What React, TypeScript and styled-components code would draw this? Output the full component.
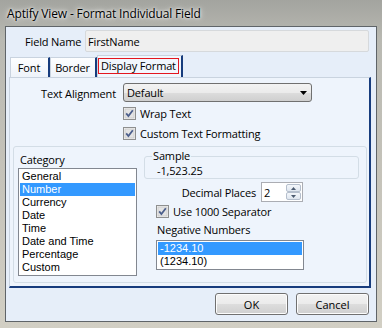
import React from "react";
import styled, { createGlobalStyle } from "styled-components";

const GlobalStyle = createGlobalStyle`
  html, body {
    margin: 0;
    padding: 0;
  }
  body {
    font-family: "Open Sans", "Noto Sans", sans-serif;
    font-size: 11px;
    letter-spacing: -0.15px;
    color: #000;
  }
`;

const Frame = styled.div`
  width: 382px;
  height: 328px;
  box-sizing: border-box;
  padding: 0 5px 6px 5px;
  display: flex;
  flex-direction: column;
  background: linear-gradient(180deg, #a3a49f 0%, #b9b9b2 12%, #c4c2b9 50%, #d2cfc4 100%);
`;

const TitleBar = styled.div`
  height: 26px;
  flex-shrink: 0;
  display: flex;
  align-items: center;
  padding-left: 2px;
  font-size: 12px;
  color: #000;
  text-shadow: 0 0 6px #fff, 0 0 3px #fff;
`;

const Client = styled.div`
  flex: 1;
  min-height: 0;
  border: 1px solid #5f6468;
  background: #e6eef9;
  display: flex;
  flex-direction: column;
`;

const FieldRow = styled.div`
  display: flex;
  align-items: center;
  padding: 3px 7px 0 19px;
`;

const FieldLabel = styled.span`
  width: 60px;
  white-space: nowrap;
`;

const ReadOnlyInput = styled.div`
  flex: 1;
  height: 22px;
  box-sizing: border-box;
  border: 1px solid #d6d9dc;
  border-radius: 2px;
  background: #efefef;
  display: flex;
  align-items: center;
  padding-left: 2px;
`;

const TabStrip = styled.div`
  display: flex;
  align-items: flex-end;
  padding-left: 4px;
  margin-top: 3px;
  height: 22px;
`;

const Tab = styled.div<{ $active?: boolean; $w: number }>`
  box-sizing: border-box;
  width: ${(p) => p.$w}px;
  height: ${(p) => (p.$active ? 22 : 20)}px;
  padding: ${(p) => (p.$active ? "1px 1px 0 0" : "0 1px 0 0")};
  border: 1px solid #c9d3df;
  border-bottom: none;
  border-right: 2px solid #173c7d;
  background: ${(p) =>
    p.$active ? "#f1f6fd" : "linear-gradient(180deg, #fdfeff 0%, #eef3fa 100%)"};
  display: flex;
  justify-content: ${(p) => (p.$active ? "flex-start" : "center")};
  align-items: ${(p) => (p.$active ? "flex-start" : "center")};
  white-space: nowrap;
`;

const FocusLabel = styled.span`
  border: 1px solid #e3161f;
  padding: 0 2px;
  line-height: 14px;
  margin-top: 1px;
`;

const TabPanel = styled.div`
  margin: 0 5px 0 3px;
  border: 1px solid #c9d3df;
  border-right: 2px solid #173c7d;
  border-bottom: 2px solid #173c7d;
  background: #eef4fc;
  padding-top: 5px;
  display: flex;
  flex-direction: column;
`;

const OptionsGrid = styled.div`
  display: grid;
  grid-template-columns: 106px 189px;
  column-gap: 7px;
  align-items: center;
`;

const RightLabel = styled.span`
  text-align: right;
  white-space: nowrap;
`;

const Select = styled.div`
  height: 19px;
  box-sizing: border-box;
  border: 1px solid #707070;
  border-radius: 3px;
  background: linear-gradient(180deg, #f3f3f3 0%, #ebebeb 50%, #dddddd 51%, #cfcfcf 100%);
  display: flex;
  align-items: center;
  justify-content: space-between;
  padding: 0 4px 0 3px;
  margin-bottom: 1px;
`;

const CheckRow = styled.label<{ $indent?: number; $h?: number; $top?: number }>`
  display: flex;
  align-items: center;
  gap: 4px;
  height: ${(p) => p.$h ?? 20}px;
  margin-top: ${(p) => p.$top ?? 0}px;
  padding-left: ${(p) => p.$indent ?? 0}px;
  white-space: nowrap;
`;

const GroupBox = styled.div`
  margin: 3px 2px 3px 3px;
  border: 1px solid #d3dde6;
  border-radius: 3px;
  padding: 4px 7px 6px 4px;
  display: grid;
  grid-template-columns: 119px 1fr;
  column-gap: 7px;
`;

const Column = styled.div`
  display: flex;
  flex-direction: column;
`;

const ColumnLabel = styled.div<{ $indent?: number; $h?: number }>`
  line-height: ${(p) => p.$h ?? 17}px;
  height: ${(p) => p.$h ?? 17}px;
  padding-left: ${(p) => p.$indent ?? 2}px;
  white-space: nowrap;
`;

const ListBox = styled.div<{ $w?: number; $h: number; $indent?: number }>`
  box-sizing: border-box;
  width: ${(p) => (p.$w ? `${p.$w}px` : "auto")};
  height: ${(p) => p.$h}px;
  margin-left: ${(p) => p.$indent ?? 0}px;
  border: 1px solid #828790;
  background: #fff;
  padding: 1px;
  display: flex;
  flex-direction: column;
`;

const ListItem = styled.div<{ $selected?: boolean }>`
  height: 13px;
  line-height: 13px;
  padding-left: 2px;
  font-family: "Liberation Sans", Arial, sans-serif;
  font-size: 11px;
  letter-spacing: 0;
  background: ${(p) => (p.$selected ? "#3399ff" : "transparent")};
  color: ${(p) => (p.$selected ? "#fff" : "#000")};
  white-space: nowrap;
`;

const SampleSet = styled.fieldset`
  margin: -3px 0 0 0;
  width: 215px;
  box-sizing: border-box;
  border: 1px solid #d3dde6;
  border-radius: 3px;
  padding: 0 4px 1px 12px;
  min-inline-size: 0;

  legend {
    padding: 0 1px;
    margin-left: -5px;
    line-height: 16px;
  }
`;

const SampleValue = styled.div`
  line-height: 13px;
`;

const DecimalRow = styled.div`
  display: flex;
  align-items: center;
  gap: 5px;
  margin-top: 3px;
  width: 159px;
  justify-content: flex-end;
`;

const SpinBox = styled.div`
  width: 42px;
  height: 20px;
  box-sizing: border-box;
  border: 1px solid #abadb3;
  background: #fff;
  display: flex;
  align-items: center;
  justify-content: space-between;
  padding: 1px 1px 1px 2px;
`;

const SpinButtons = styled.div`
  display: flex;
  flex-direction: column;
  height: 100%;
  width: 15px;
`;

const SpinButton = styled.div`
  flex: 1;
  box-sizing: border-box;
  border: 1px solid #b5bfcd;
  border-radius: 2px;
  background: linear-gradient(180deg, #f4f7fb 0%, #dfe6ef 100%);
  display: flex;
  align-items: center;
  justify-content: center;
`;

const ButtonRow = styled.div`
  display: flex;
  justify-content: flex-end;
  gap: 8px;
  padding: 5px 7px 0 0;
`;

const Button = styled.button`
  width: 73px;
  height: 22px;
  border: 1px solid #707070;
  border-radius: 3px;
  background: linear-gradient(180deg, #f2f2f2 0%, #ebebeb 50%, #dddddd 51%, #cfcfcf 100%);
  box-shadow: inset 0 0 0 1px #fcfcfc;
  font: inherit;
  color: #000;
  padding: 0;
`;

const CheckBox = () => (
  <svg width="13" height="13" viewBox="0 0 13 13">
    <rect x="0.5" y="0.5" width="12" height="12" fill="#f4f4f4" stroke="#8e8f8f" />
    <rect x="2" y="2" width="9" height="9" fill="#e4e4e4" stroke="#c9c9c9" strokeWidth="0.8" />
    <path d="M3.2 6.4 L5.4 9 L9.8 3.3" fill="none" stroke="#4c5f8c" strokeWidth="1.8" />
  </svg>
);

const DownArrow = () => (
  <svg width="7" height="4" viewBox="0 0 7 4">
    <path d="M0 0 H7 L3.5 4 Z" fill="#000" />
  </svg>
);

const SpinArrow = ({ up }: { up?: boolean }) => (
  <svg width="5" height="3" viewBox="0 0 5 3">
    <path d={up ? "M0 3 H5 L2.5 0 Z" : "M0 0 H5 L2.5 3 Z"} fill="#4b5a70" />
  </svg>
);

const categories = [
  "General",
  "Number",
  "Currency",
  "Date",
  "Time",
  "Date and Time",
  "Percentage",
  "Custom",
];

const App = () => {
  return (
    <>
      <GlobalStyle />
      <Frame>
        <TitleBar>Aptify View - Format Individual Field</TitleBar>
        <Client>
          <FieldRow>
            <FieldLabel>Field Name</FieldLabel>
            <ReadOnlyInput>FirstName</ReadOnlyInput>
          </FieldRow>
          <TabStrip>
            <Tab $w={40}>Font</Tab>
            <Tab $w={47}>Border</Tab>
            <Tab $w={86} $active>
              <FocusLabel>Display Format</FocusLabel>
            </Tab>
          </TabStrip>
          <TabPanel>
            <OptionsGrid>
              <RightLabel>Text Alignment</RightLabel>
              <Select>
                <span>Default</span>
                <DownArrow />
              </Select>
              <span />
              <CheckRow>
                <CheckBox />
                Wrap Text
              </CheckRow>
              <span />
              <CheckRow>
                <CheckBox />
                Custom Text Formatting
              </CheckRow>
            </OptionsGrid>
            <GroupBox>
              <Column>
                <ColumnLabel>Category</ColumnLabel>
                <ListBox $h={108}>
                  {categories.map((c) => (
                    <ListItem key={c} $selected={c === "Number"}>
                      {c}
                    </ListItem>
                  ))}
                </ListBox>
              </Column>
              <Column>
                <SampleSet>
                  <legend>Sample</legend>
                  <SampleValue>-1,523.25</SampleValue>
                </SampleSet>
                <DecimalRow>
                  <span>Decimal Places</span>
                  <SpinBox>
                    <span>2</span>
                    <SpinButtons>
                      <SpinButton>
                        <SpinArrow up />
                      </SpinButton>
                      <SpinButton>
                        <SpinArrow />
                      </SpinButton>
                    </SpinButtons>
                  </SpinBox>
                </DecimalRow>
                <CheckRow $indent={12} $h={17} $top={1}>
                  <CheckBox />
                  Use 1000 Separator
                </CheckRow>
                <ColumnLabel $indent={13} $h={20}>
                  Negative Numbers
                </ColumnLabel>
                <ListBox $w={148} $h={30} $indent={12}>
                  <ListItem $selected>-1234.10</ListItem>
                  <ListItem>(1234.10)</ListItem>
                </ListBox>
              </Column>
            </GroupBox>
          </TabPanel>
          <ButtonRow>
            <Button>OK</Button>
            <Button>Cancel</Button>
          </ButtonRow>
        </Client>
      </Frame>
    </>
  );
};

export default App;
